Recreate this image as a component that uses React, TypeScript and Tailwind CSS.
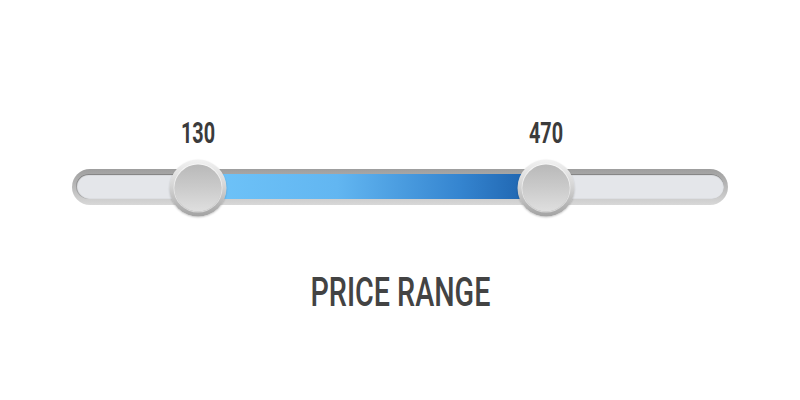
import React from "react";

type Handle = { value: number; at: number };

// positions are fractions of the track width
const handles: Handle[] = [
  { value: 130, at: 0.192 },
  { value: 470, at: 0.723 },
];

function Knob({ at }: { at: number }) {
  return (
    <div
      className="absolute top-1/2 -translate-x-1/2 -translate-y-1/2 w-[57px] h-[57px] rounded-full p-[5px] bg-[linear-gradient(to_bottom,#f2f2f2_0%,#d6d6d6_45%,#a2a2a2_100%)] shadow-[0_1px_2px_rgba(0,0,0,0.2)]"
      style={{ left: `${at * 100}%`, marginTop: 1 }}
    >
      <div className="w-full h-full rounded-full bg-[linear-gradient(to_bottom,#b9b9b9_0%,#cbcbcb_50%,#dfdfdf_100%)] shadow-[0_0_0_1px_rgba(255,255,255,0.5)]" />
    </div>
  );
}

export default function App() {
  const [lo, hi] = handles;
  return (
    <div className="w-[800px] h-[400px] bg-white flex flex-col pt-[118px] font-['Roboto',sans-serif]">
      <div className="relative w-[656px] ml-[72px]">
        {/* value labels above each handle */}
        <div className="relative h-[30px]">
          {handles.map((h) => (
            <span
              key={h.value}
              className="absolute top-0 -translate-x-1/2 text-[30px] leading-none font-bold text-[#3b3b3b]"
              style={{ left: `${h.at * 100}%` }}
            >
              <span className="inline-block scale-x-[0.66]">{h.value}</span>
            </span>
          ))}
        </div>

        {/* track */}
        <div className="relative mt-[21px] h-[36px] rounded-full pt-[5px] pb-[6px] px-[4px] bg-[linear-gradient(to_bottom,#9e9e9e_0%,#b4b4b4_40%,#d8d8d8_100%)]">
          <div className="h-full rounded-full bg-[#e4e6ea] shadow-[inset_0_1px_1px_#7d7d7d,inset_1px_0_1px_#9a9a9a]" />
          <div
            className="absolute top-[5px] bottom-[6px] bg-[linear-gradient(to_right,#6fc4f9_0%,#62b6f1_40%,#3585d0_75%,#195ca7_100%)]"
            style={{ left: `${lo.at * 100}%`, right: `${(1 - hi.at) * 100}%` }}
          />
          <Knob at={lo.at} />
          <Knob at={hi.at} />
        </div>
      </div>

      <div className="mt-[67px] flex justify-center">
        <span className="inline-block text-[41px] leading-none font-medium text-[#434343] scale-x-[0.70]">
          PRICE RANGE
        </span>
      </div>
    </div>
  );
}
